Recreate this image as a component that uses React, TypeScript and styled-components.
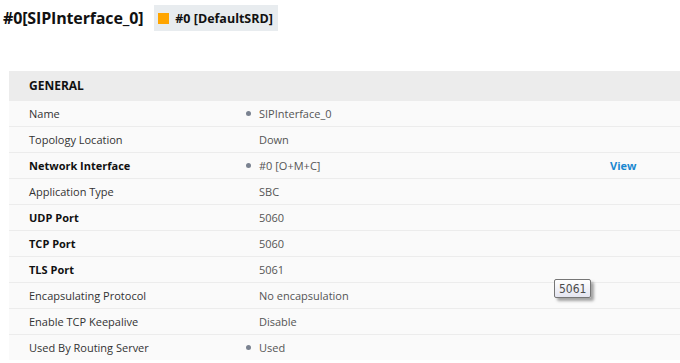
import styled, { createGlobalStyle } from "styled-components";

const GlobalStyle = createGlobalStyle`
  html, body {
    margin: 0;
    padding: 0;
    background: #ffffff;
    font-family: "Open Sans", "Noto Sans", sans-serif;
    overflow: hidden;
  }
`;

const Page = styled.div`
  width: 680px;
  height: 363px;
  position: relative;
`;

const TitleBar = styled.div`
  display: flex;
  align-items: center;
  gap: 11px;
  padding: 5px 0 0 3px;
  height: 26px;
`;

const Title = styled.h1`
  margin: 0;
  font-size: 16px;
  font-weight: 700;
  color: #111;
  letter-spacing: -0.15px;
`;

const Badge = styled.span`
  display: inline-flex;
  align-items: center;
  gap: 6px;
  background: #e8ecef;
  padding: 0 5px 0 4px;
  height: 26px;
  font-size: 12.5px;
  font-weight: 700;
  color: #111;
`;

const Square = styled.span`
  width: 11px;
  height: 11px;
  background: #ffa500;
`;

const Panel = styled.section`
  margin: 40px 0 0 9px;
  background: #fafafa;
`;

const Header = styled.div`
  height: 29px;
  display: flex;
  align-items: center;
  padding-left: 20px;
  background: #ececec;
  font-size: 12px;
  font-weight: 700;
  color: #111;
`;

const Row = styled.div`
  display: grid;
  grid-template-columns: 217px 364px 1fr;
  align-items: center;
  height: 26px;
  padding-left: 20px;
  box-sizing: border-box;
  border-top: 1px solid #ececec;
  font-size: 11px;
  &:first-of-type {
    border-top: none;
  }
`;

const Label = styled.span<{ $bold?: boolean }>`
  color: ${(p) => (p.$bold ? "#111" : "#333")};
  font-weight: ${(p) => (p.$bold ? 700 : 400)};
`;

const Value = styled.span`
  display: flex;
  align-items: center;
  color: #555;
`;

const Dot = styled.span<{ $show?: boolean }>`
  width: 5px;
  height: 5px;
  border-radius: 50%;
  background: ${(p) => (p.$show ? "#7a8290" : "transparent")};
  margin-right: 8px;
`;

const ViewLink = styled.a`
  color: #1a88d0;
  font-weight: 700;
  text-decoration: none;
  font-size: 11px;
`;

const Tooltip = styled.div`
  position: absolute;
  left: 554px;
  top: 279px;
  padding: 0 4px;
  height: 19px;
  line-height: 18px;
  box-sizing: border-box;
  border: 1px solid #767676;
  border-radius: 2px;
  background: linear-gradient(#ffffff, #e4e5f0);
  box-shadow: 3px 3px 3px rgba(0, 0, 0, 0.35);
  font-family: "DejaVu Sans Condensed", "Liberation Sans", sans-serif;
  font-size: 12px;
  color: #4c4c4c;
`;

type Field = { label: string; value: string; bold?: boolean; dot?: boolean; view?: boolean };

const fields: Field[] = [
  { label: "Name", value: "SIPInterface_0", dot: true },
  { label: "Topology Location", value: "Down" },
  { label: "Network Interface", value: "#0 [O+M+C]", bold: true, dot: true, view: true },
  { label: "Application Type", value: "SBC" },
  { label: "UDP Port", value: "5060", bold: true },
  { label: "TCP Port", value: "5060", bold: true },
  { label: "TLS Port", value: "5061", bold: true },
  { label: "Encapsulating Protocol", value: "No encapsulation" },
  { label: "Enable TCP Keepalive", value: "Disable" },
  { label: "Used By Routing Server", value: "Used", dot: true },
];

export default function App() {
  return (
    <Page>
      <GlobalStyle />
      <TitleBar>
        <Title>#0[SIPInterface_0]</Title>
        <Badge>
          <Square />
          #0 [DefaultSRD]
        </Badge>
      </TitleBar>
      <Panel>
        <Header>GENERAL</Header>
        {fields.map((f) => (
          <Row key={f.label}>
            <Label $bold={f.bold}>{f.label}</Label>
            <Value>
              <Dot $show={f.dot} />
              {f.value}
            </Value>
            <span>{f.view && <ViewLink href="#">View</ViewLink>}</span>
          </Row>
        ))}
      </Panel>
      <Tooltip>5061</Tooltip>
    </Page>
  );
}
